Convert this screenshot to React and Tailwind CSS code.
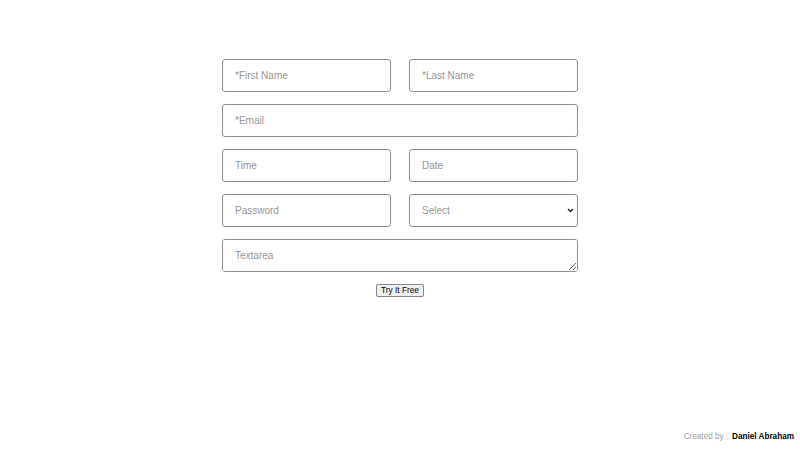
import React from "react";

const field =
  "h-[33px] w-full rounded-[3px] border border-[#8f8f8f] bg-white px-[12px] text-[10px] placeholder:text-[#959595] outline-none";

const App = () => {
  return (
    <div
      className="flex min-h-screen flex-col bg-white"
      style={{ fontFamily: '"Liberation Sans", Arial, sans-serif' }}
    >
      <form className="mx-auto mt-[59px] flex w-[356px] flex-col gap-[12px]">
        <div className="grid grid-cols-2 gap-[18px]">
          <input className={field} placeholder="*First Name" />
          <input className={field} placeholder="*Last Name" />
        </div>
        <input className={field} placeholder="*Email" />
        <div className="grid grid-cols-2 gap-[18px]">
          <input className={field} placeholder="Time" />
          <input className={field} placeholder="Date" />
        </div>
        <div className="grid grid-cols-2 gap-[18px]">
          <input className={field} type="password" placeholder="Password" />
          <div className="relative">
            <select
              className="h-[33px] w-full appearance-none rounded-[3px] border border-[#8f8f8f] bg-white px-[12px] text-[10px] text-[#959595] outline-none"
              defaultValue=""
            >
              <option value="">Select</option>
              <option value="1">Option 1</option>
            </select>
            <svg
              className="pointer-events-none absolute right-[4px] top-[14px]"
              width="7"
              height="5"
              viewBox="0 0 7 5"
            >
              <path d="M1 1l2.5 2.5L6 1" fill="none" stroke="#222" strokeWidth="1.4" />
            </svg>
          </div>
        </div>
        <textarea
          className="h-[33px] w-full rounded-[3px] border border-[#8f8f8f] bg-white px-[12px] py-[10px] text-[10px] leading-[12px] placeholder:text-[#959595] outline-none"
          placeholder="Textarea"
        />
        <div className="flex justify-center">
          <button
            type="button"
            className="h-[13px] w-[48px] rounded-[2px] border border-[#858585] bg-[#efefef] px-0 text-[8.3px] leading-[11px] text-black"
          >
            Try It Free
          </button>
        </div>
      </form>

      <footer className="mt-auto flex items-center justify-end gap-[3px] px-[6px] pb-[7px] text-[8.2px]">
        <span className="text-[#a0a0a0]">Created by</span>
        <span className="text-[#e0e0e0]">:</span>
        <span className="font-bold text-black">Daniel Abraham</span>
      </footer>
    </div>
  );
};

export default App;
